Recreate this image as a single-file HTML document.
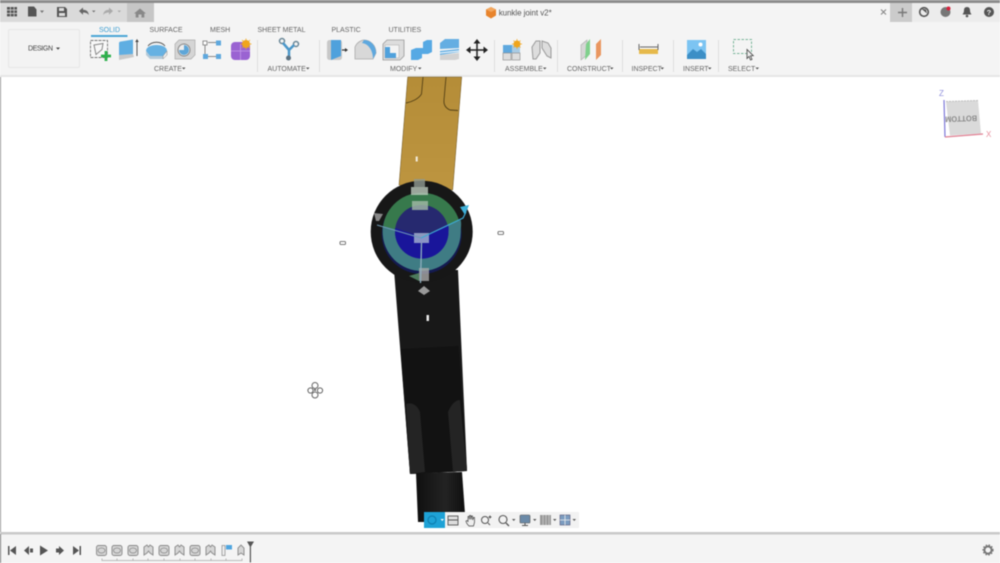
<!DOCTYPE html>
<html><head><meta charset="utf-8"><style>
html,body{margin:0;padding:0;background:#fff}
svg{display:block;filter:blur(.45px)}
text{font-family:"Liberation Sans",sans-serif;fill:#666}
</style></head><body>
<svg width="1000" height="563" viewBox="0 0 1000 563" xmlns="http://www.w3.org/2000/svg">
<defs>
<linearGradient id="g" x1="0" y1="0" x2="0" y2="1"><stop offset="0" stop-color="#b58d38"/><stop offset="1" stop-color="#bd9540"/></linearGradient>
<linearGradient id="c" x1="0" y1="0" x2="1" y2="0"><stop offset="0" stop-color="#0f0f0f"/><stop offset=".6" stop-color="#232323"/><stop offset="1" stop-color="#0f0f0f"/></linearGradient>
</defs>
<rect width="1000" height="563" fill="#fff"/>
<rect x="0" y="75" width="1" height="488" fill="#999"/>
<!-- header -->
<rect width="1000" height="3" fill="#8c8c8c"/>
<rect y="3" width="127" height="19" fill="#dadada"/>
<rect x="127" y="3" width="27" height="19" fill="#c6c6c6"/>
<rect x="154" y="3" width="736" height="19" fill="#f4f4f4"/>
<rect x="890" y="3" width="22" height="19" fill="#cbcbcb"/>
<rect x="912" y="3" width="88" height="19" fill="#ececec"/>
<rect x="0" y="22" width="1000" height="53" fill="#f4f4f4"/>
<rect x="0" y="75" width="1000" height="2" fill="#e6e6e6"/>
<!-- header icons -->
<g fill="#555">
<rect x="7" y="7" width="3" height="2.600"/><rect x="10.700" y="7" width="3" height="2.600"/><rect x="14.400" y="7" width="2.600" height="2.600"/>
<rect x="7" y="10.400" width="3" height="2.600"/><rect x="10.700" y="10.400" width="3" height="2.600"/><rect x="14.400" y="10.400" width="2.600" height="2.600"/>
<rect x="7" y="13.800" width="3" height="2.600"/><rect x="10.700" y="13.800" width="3" height="2.600"/><rect x="14.400" y="13.800" width="2.600" height="2.600"/>
<path d="M28 6.500h6l2.500 3v7h-8.500z"/><path d="M40 10.500h4l-2 2.500z" fill="#777"/>
<path d="M57 7h8l2 2v8h-10z"/><rect x="59" y="8" width="5" height="3" fill="#ddd"/><rect x="59" y="13" width="6" height="3" fill="#ddd"/>
<path d="M79 11l4-3.500v2.300c3.500 0 5.500 2 5.800 5.200-1.300-1.800-3-2.500-5.800-2.500v2.200z" fill="#666"/><path d="M92 10.500h3.500l-1.750 2z" fill="#777"/>
<path d="M113 11l-4-3.500v2.300c-3.500 0-5.500 2-5.800 5.200 1.300-1.800 3-2.500 5.800-2.500v2.200z" fill="#aaa"/><path d="M117.500 10.500h3.500l-1.750 2z" fill="#aaa"/>
<path d="M140 8.500l6 5h-1.700v4h-2.800v-3h-3v3h-2.800v-4H134z" fill="#888"/>
</g>
<path d="M486 9.500l5-2.500 5 2.500v6l-5 3-5-3z" fill="#e8842c"/><path d="M486 9.500l5 2.500 5-2.500-5-2.500z" fill="#f3a75e"/>
<text x="498.700" y="15.500" font-size="8" textLength="53" style="fill:#555">kunkle joint v2*</text>
<path d="M881 9.500l5 5M886 9.500l-5 5" stroke="#888" stroke-width="1.100"/>
<path d="M902.500 8v9M898 12.500h9" stroke="#777" stroke-width="1.400"/>
<circle cx="924" cy="12" r="4.300" fill="none" stroke="#555" stroke-width="1.600"/><path d="M921 8.500l5 1 1 4z" fill="#555"/>
<circle cx="945.500" cy="12" r="5" fill="#777"/><circle cx="948.500" cy="8.500" r="2" fill="#d8203c"/>
<path d="M967 7c2.200 0 3 1.500 3 3.500 0 2 1 3 1.500 4h-9c.5-1 1.500-2 1.500-4 0-2 .8-3.500 3-3.500z" fill="#555"/><circle cx="967" cy="16" r="1.300" fill="#555"/>
<circle cx="989" cy="12" r="5" fill="#555"/><text x="986.600" y="15" font-size="7.500" font-weight="bold" style="fill:#eee">?</text>
<!-- design -->
<rect x="8.500" y="29.500" width="71" height="38" rx="1.500" fill="#f3f3f3" stroke="#e6e6e6"/>
<text x="28" y="50.500" font-size="7" textLength="25" style="fill:#444">DESIGN</text><path d="M56 47.500h4l-2 2.200z" fill="#444"/>
<!-- tabs -->
<text x="99" y="32" font-size="7" style="fill:#3f9fd2">SOLID</text>
<rect x="91" y="35" width="36.500" height="2" fill="#4aa5d6"/>
<text x="149.500" y="32" font-size="7">SURFACE</text>
<text x="210" y="32" font-size="7">MESH</text>
<text x="257.500" y="32" font-size="7">SHEET METAL</text>
<text x="331.500" y="32" font-size="7">PLASTIC</text>
<text x="388.500" y="32" font-size="7">UTILITIES</text>
<!-- group labels -->
<text x="154" y="71" font-size="7">CREATE</text><path d="M182 67.500h3.500l-1.750 2z" fill="#555"/>
<text x="267.500" y="71" font-size="7">AUTOMATE</text><path d="M306 67.500h3.500l-1.750 2z" fill="#555"/>
<text x="390" y="71" font-size="7">MODIFY</text><path d="M418 67.500h3.500l-1.750 2z" fill="#555"/>
<text x="505" y="71" font-size="7">ASSEMBLE</text><path d="M543 67.500h3.500l-1.750 2z" fill="#555"/>
<text x="567" y="71" font-size="7">CONSTRUCT</text><path d="M610 67.500h3.500l-1.750 2z" fill="#555"/>
<text x="631.500" y="71" font-size="7">INSPECT</text><path d="M660.500 67.500h3.500l-1.750 2z" fill="#555"/>
<text x="683" y="71" font-size="7">INSERT</text><path d="M708 67.500h3.500l-1.750 2z" fill="#555"/>
<text x="728" y="71" font-size="7">SELECT</text><path d="M755.500 67.500h3.500l-1.750 2z" fill="#555"/>
<g fill="#dedede"><rect x="257" y="40" width="1" height="32"/><rect x="319" y="40" width="1" height="32"/><rect x="494" y="40" width="1" height="32"/><rect x="557" y="40" width="1" height="32"/><rect x="622" y="40" width="1" height="32"/><rect x="673" y="40" width="1" height="32"/><rect x="718" y="40" width="1" height="32"/></g>
<!-- create icons -->
<rect x="90.500" y="40.500" width="17" height="17" fill="#f8f8f8" stroke="#777" stroke-width=".9" stroke-dasharray="3 1"/>
<path d="M94 45l9-1.500-1 6-6 5z" fill="none" stroke="#888"/>
<path d="M106 51v10M101 56h10" stroke="#2cb04b" stroke-width="2.800"/>
<path d="M119 43c0-1 1-1.500 2-1.500l12-2v15l-14 2z" fill="#5faee2"/><path d="M119 55l14-1 1 3-15 3z" fill="#c9c9c9"/><path d="M137 41v15" stroke="#444" stroke-width=".9"/><path d="M137 39l1.800 3h-3.600z" fill="#444"/>
<path d="M146 51c0-4 5-6 10.500-6s10.500 2 10.500 6l-4 5h-13z" fill="#66b1e2"/><path d="M146 51l4 5h13v3h-13l-4-4z" fill="#b4c9d8"/><path d="M163 56l4-5v4l-4 4z" fill="#eee" stroke="#888" stroke-width=".5"/><path d="M148 46c4-5 13-5 17 0" fill="none" stroke="#555"/>
<path d="M175 44l4-4h16v15l-4 4h-16z" fill="#d5d5d5" stroke="#aaa" stroke-width=".7"/><circle cx="184" cy="50" r="6" fill="#eee" stroke="#888"/><path d="M184 50v-5a5 5 0 1 1-5 5z" fill="#5ea6d8"/>
<g fill="none" stroke="#888"><path d="M208 42.500h9M208 56.500h9M205 45v9"/></g>
<rect x="203" y="41" width="4" height="4" fill="#fff" stroke="#777" stroke-width=".8"/><rect x="203" y="54" width="5" height="5" fill="#5ea8de"/>
<rect x="216" y="40.500" width="5" height="5" fill="#5ea8de"/><rect x="216" y="54" width="5" height="5" fill="#5ea8de"/>
<rect x="231" y="42" width="19" height="18" rx="4" fill="#9a63d2"/><path d="M240.500 44v16M231 51h19" fill="none" stroke="#c49ae8" stroke-width=".8"/>
<circle cx="246" cy="44" r="4" fill="#f0a51c"/><path d="M246 38.500v11M240.500 44h11M242 40l8 8M250 40l-8 8" stroke="#f0a51c" stroke-width=".7"/>
<!-- automate -->
<g fill="none" stroke="#6a8797" stroke-width="1.500"><circle cx="282" cy="41" r="2.500"/><circle cx="296" cy="44" r="2.500"/></g>
<path d="M283 43l6 7 5-5M289 50v8" fill="none" stroke="#4b97c9" stroke-width="2.500"/>
<circle cx="288.500" cy="58" r="2.500" fill="#5c7180"/>
<!-- modify icons -->
<rect x="327" y="40" width="15" height="20" rx="2.500" fill="#c8c8c8"/><path d="M331 40h10v16l-10 4z" fill="#4fa1dc"/><path d="M342 50h4" stroke="#333" stroke-width="1.200"/><path d="M345 48l3 2-3 2z" fill="#333"/>
<path d="M355 59V47c2-5 7-7 9-7 6 0 12 5 12 13l-3 6z" fill="#d8d8d8" stroke="#aaa" stroke-width=".8"/><path d="M364 40c6 0 12 5 12 13l-3 6c0-8-4-15-11-16z" fill="#5ea8de"/>
<path d="M383 44l4-4h17v16l-4 4h-17z" fill="#ddd" stroke="#999" stroke-width=".8"/><rect x="385" y="45" width="14" height="13" fill="#f3f3f3" stroke="#aaa" stroke-width=".5"/><path d="M385 47h5v6h6v5h-11z" fill="#4fa1dc"/>
<path d="M411 50l5-2h7v-6l4-2h5v12l-4 2h-6v4l-4 2h-7z" fill="#56a9e4"/>
<path d="M440 43l5-4h14v9l-19 1z" fill="#64aee2"/><path d="M440 51l19-2v3l-19 3z" fill="#64aee2"/><path d="M440 53l19-2" stroke="#fff"/><path d="M440 55l19-2v6l-4 1h-15z" fill="#d2d2d2"/>
<path d="M477 41v18M468 50h18" stroke="#222" stroke-width="1.500"/><path d="M477 39l3.500 4.500h-7zM477 61l3.500-4.500h-7zM466 50l4.500-3.500v7zM488 50l-4.500-3.500v7z" fill="#222"/>
<!-- assemble -->
<rect x="503" y="45" width="9" height="8" fill="#5ea8de"/><rect x="512" y="45" width="8" height="8" fill="#a9cbe4"/><rect x="503" y="53" width="8" height="7" fill="#ddd" stroke="#888" stroke-width=".6"/><rect x="512" y="53" width="8" height="7" fill="#ddd" stroke="#888" stroke-width=".6"/>
<circle cx="517" cy="44" r="3.500" fill="#f0a51c"/><path d="M517 39v10M512 44h10M513.500 40.500l7 7M520.500 40.500l-7 7" stroke="#f0a51c" stroke-width=".7"/>
<path d="M532 47l4-6h4v12l-4 6h-3zM542 41l6 2 3 5v10l-4-2-5-8z" fill="#ddd" stroke="#999"/>
<!-- construct -->
<path d="M581 45l6-5v15l-6 5z" fill="#d6d6d6" stroke="#aaa" stroke-width=".6"/><path d="M586 44l4-5v15l-5 6z" fill="#7fd08c"/><path d="M596 44l5-5v16l-5 5z" fill="#e9965f"/>
<!-- inspect -->
<rect x="639" y="49" width="19" height="5" fill="#e6b94b"/><path d="M639 44v6M658 44v6M640 47h18" stroke="#666"/>
<!-- insert -->
<rect x="687" y="40" width="19" height="19" fill="#7cc4f2"/><path d="M687 55l6-6 4 3 4-3 5 5v5h-19z" fill="#3c8fc6"/><circle cx="700.500" cy="44.500" r="2" fill="#fff"/>
<!-- select -->
<rect x="733.500" y="39.500" width="18" height="14" fill="none" stroke="#79b59a" stroke-dasharray="2.500 1.500"/>
<path d="M747 49.500v9l2-2 1.500 3.500 1.500-.6-1.500-3.500 2.800-.2z" fill="#eee" stroke="#444" stroke-width=".8"/>
<!-- view cube -->
<path d="M946 101.500l32-1 3 33-31 2z" fill="#dadada"/>
<path d="M946 101.500l32-1" stroke="#bbb" stroke-dasharray="2 1"/>
<path d="M944 100l1 37" stroke="#7d78d8" stroke-width="1.200"/>
<path d="M945 137l38-3" stroke="#e07f92" stroke-width="1.200"/>
<text x="939" y="96" font-size="8" style="fill:#8f8fdc">Z</text>
<text x="986" y="137" font-size="8" style="fill:#e68d9c">X</text>
<text font-size="8" font-weight="bold" textLength="32" lengthAdjust="spacingAndGlyphs" transform="translate(977 115.500) rotate(178)" style="fill:#8a8a8a">BOTTOM</text>
<!-- markers -->
<rect x="340" y="241.500" width="5.500" height="3" rx=".8" fill="#fff" stroke="#555" stroke-width=".8"/>
<rect x="498" y="231.500" width="5.500" height="3" rx=".8" fill="#fff" stroke="#555" stroke-width=".8"/>
<!-- gold arm -->
<path d="M407.700 77h54l-9 113-53.700-5z" fill="url(#g)" stroke="#6d5420" stroke-width=".5"/>
<path d="M423 77l-1.500 17c-3 5-10 8-15.500 9M446 77l-2 23c-.5 5 1.500 8 6 10l8 .5" fill="none" stroke="#544015" stroke-width=".9"/>
<rect x="415.700" y="156.500" width="2" height="5" fill="#f4eee0"/>
<!-- black arm -->
<path d="M394 270h64l9 201-57 3z" fill="#181818"/>
<path d="M400.500 349l58-3 8.500 125-57 3z" fill="#121212"/>
<path d="M406 404c6-2 11 1 14 8l5 60-15 2z" fill="#242424"/>
<path d="M448 412c3-7 7-12 12-12l7 70-14 2z" fill="#242424"/>
<rect x="426.500" y="315" width="2.500" height="6" fill="#e8e8e8"/>
<!-- cylinder -->
<path d="M416 473l46-1 3 42v8h-47z" fill="url(#c)"/>
<!-- hub -->
<circle cx="421.700" cy="231.700" r="51" fill="#171717"/>
<circle cx="421.700" cy="234" r="40" fill="#141a50"/>
<circle cx="421.700" cy="231.700" r="39" fill="#37794c"/>
<path d="M382.700 226l39 10 39-16c1 4 0 8 0 12a39 39 0 0 1-78 0z" fill="#3f7c84"/>
<circle cx="421.700" cy="231.700" r="26.700" fill="#26296f"/>
<path d="M395 228l27 9 26-12c1 2 .5 5 .5 7a26.700 26.700 0 0 1-53.400 0z" fill="#19159a"/>
<!-- manipulators -->
<g opacity=".8">
<rect x="414" y="179" width="11" height="9" fill="#8f9a92"/>
<rect x="411" y="187" width="17" height="8" fill="#bccabd"/>
<rect x="412" y="201" width="16" height="9" fill="#a4bba8"/>
<rect x="414" y="233" width="15" height="10" fill="#a7b5d2"/>
<rect x="419" y="268" width="10" height="13" fill="#a9a9a9"/>
</g>
<path d="M376 221l-2-8 9 1-4 7z" fill="#888"/>
<path d="M377 225l44 13" fill="none" stroke="#6f9ab4" stroke-width="1"/>
<path d="M421 238l42-20 3-6" fill="none" stroke="#3fa9d3" stroke-width="1.200"/>
<path d="M460 207l9-2-4 10z" fill="#3fb0d8"/>
<path d="M421.500 243l-1 40" stroke="#8fb0c0" stroke-width="1.300"/>
<path d="M409 276l10-3v8z" fill="#4d7a5c"/>
<path d="M418 291l6-5 6 5-6 4z" fill="#999"/>
<!-- pan cursor -->
<g fill="none" stroke="#666" stroke-width="1"><circle cx="315" cy="385.500" r="3"/><circle cx="310.500" cy="390.500" r="2.600"/><circle cx="320" cy="390.500" r="2.600"/><circle cx="315" cy="395" r="3"/></g>
<circle cx="315" cy="390" r="1" fill="#555"/>
<!-- nav bar -->
<rect x="424" y="512" width="155" height="16" fill="#f2f2f2"/>
<rect x="424" y="512" width="21" height="16" fill="#1ea2d6"/>
<circle cx="432" cy="520" r="4" fill="none" stroke="#0f7fb0" stroke-width="1.200"/>
<path d="M440.500 519h3.500l-1.750 2z" fill="#fff"/>
<rect x="448" y="516" width="10" height="9" fill="#ddd" stroke="#555" stroke-width=".9"/><path d="M448 520h10" stroke="#555"/>
<path d="M469 526c-2-2-3-4-3-5l1-.5 1 1v-5h1l.5 3v-4h1.200l.3 4 .5-3.500h1l.2 4 .8-2.500h1v5l-1 3.500z" fill="#eee" stroke="#444" stroke-width=".7"/>
<circle cx="485" cy="520" r="3.500" fill="none" stroke="#555"/><path d="M488 523l2 2M490 515.500v3M488.500 517h3" stroke="#555"/>
<circle cx="503" cy="519.500" r="4" fill="none" stroke="#555" stroke-width="1.100"/><path d="M506 523l3 3" stroke="#555" stroke-width="1.300"/><path d="M512 519h3.500l-1.750 2z" fill="#555"/>
<rect x="520" y="515" width="10" height="8" rx="1" fill="#6b8aa8" stroke="#555" stroke-width=".6"/><path d="M525 523v2M522 525.500h6" stroke="#555"/><path d="M533 519h3.500l-1.750 2z" fill="#555"/>
<rect x="540" y="515" width="11" height="10" fill="#999"/><path d="M543 515v10M546 515v10M549 515v10" stroke="#ddd" stroke-width=".6"/><path d="M553 519h3.500l-1.750 2z" fill="#555"/>
<rect x="560" y="515" width="10" height="10" fill="#7b9cc0" stroke="#557" stroke-width=".6"/><path d="M565 515v10M560 520h10" stroke="#eee" stroke-width=".8"/><path d="M572.500 519h3.500l-1.750 2z" fill="#555"/>
<!-- bottom bar -->
<rect x="0" y="532" width="1000" height="2.500" fill="#c9c9c9"/>
<rect x="1" y="534.500" width="999" height="28.500" fill="#f4f4f4"/>
<rect x="0" y="534" width="1" height="29" fill="#777"/>
<g fill="#555">
<rect x="8" y="546" width="1.500" height="9"/><path d="M16 546v9l-6-4.500z"/>
<path d="M29 546v9l-5-4.500z"/><rect x="30" y="548.500" width="3" height="4"/>
<path d="M40 545.500v10l8-5z"/>
<rect x="56" y="548.500" width="3" height="4"/><path d="M59 546v9l5-4.500z"/>
<path d="M73 546v9l6-4.500z"/><rect x="79.500" y="546" width="1.500" height="9"/>
</g>
<g fill="#d5d5d5" stroke="#888" stroke-width=".9">
<rect x="96.500" y="545.500" width="10" height="10" rx="2"/><rect x="112" y="545.500" width="10" height="10" rx="2"/><rect x="128" y="545.500" width="10" height="10" rx="2"/>
<path d="M144 555v-8l3-2 1.500 2 1.500-2 3 2v8l-3-2-1.500-2-1.500 2z"/>
<rect x="159" y="545.500" width="10" height="10" rx="2"/>
<path d="M175 555v-8l3-2 1.500 2 1.500-2 3 2v8l-3-2-1.500-2-1.500 2z"/>
<rect x="190" y="545.500" width="10" height="10" rx="2"/>
<path d="M206 555v-8l3-2 1.500 2 1.500-2 3 2v8l-3-2-1.500-2-1.500 2z"/>
</g>
<g fill="none" stroke="#888" stroke-width=".8"><ellipse cx="101.500" cy="550.500" rx="3.500" ry="2.500"/><ellipse cx="117" cy="550.500" rx="3.500" ry="2.500"/><ellipse cx="133" cy="550.500" rx="3.500" ry="2.500"/><ellipse cx="164" cy="550.500" rx="3.500" ry="2.500"/><ellipse cx="195" cy="550.500" rx="3.500" ry="2.500"/></g>
<rect x="222" y="545.500" width="3" height="10" fill="#eee" stroke="#888" stroke-width=".7"/><rect x="226" y="545" width="6" height="4.500" fill="#4fa5df"/>
<path d="M238 555v-7l3-3 3 3v7l-3-2z" fill="#d5d5d5" stroke="#888" stroke-width=".9"/>
<path d="M247 541.500h7l-3 5v16h-1.200v-16z" fill="#555"/>
<path d="M102 558.500v2h140v-2M117 558.500v2M133 558.500v2M148 558.500v2M164 558.500v2M180 558.500v2M195 558.500v2M211 558.500v2M226 558.500v2" fill="none" stroke="#aaa" stroke-width=".8"/>
<circle cx="988" cy="550" r="3.600" fill="none" stroke="#777" stroke-width="2"/>
<circle cx="988" cy="550" r="5" fill="none" stroke="#777" stroke-width="1.200" stroke-dasharray="1.500 1.500"/>
</svg>
</body></html>
